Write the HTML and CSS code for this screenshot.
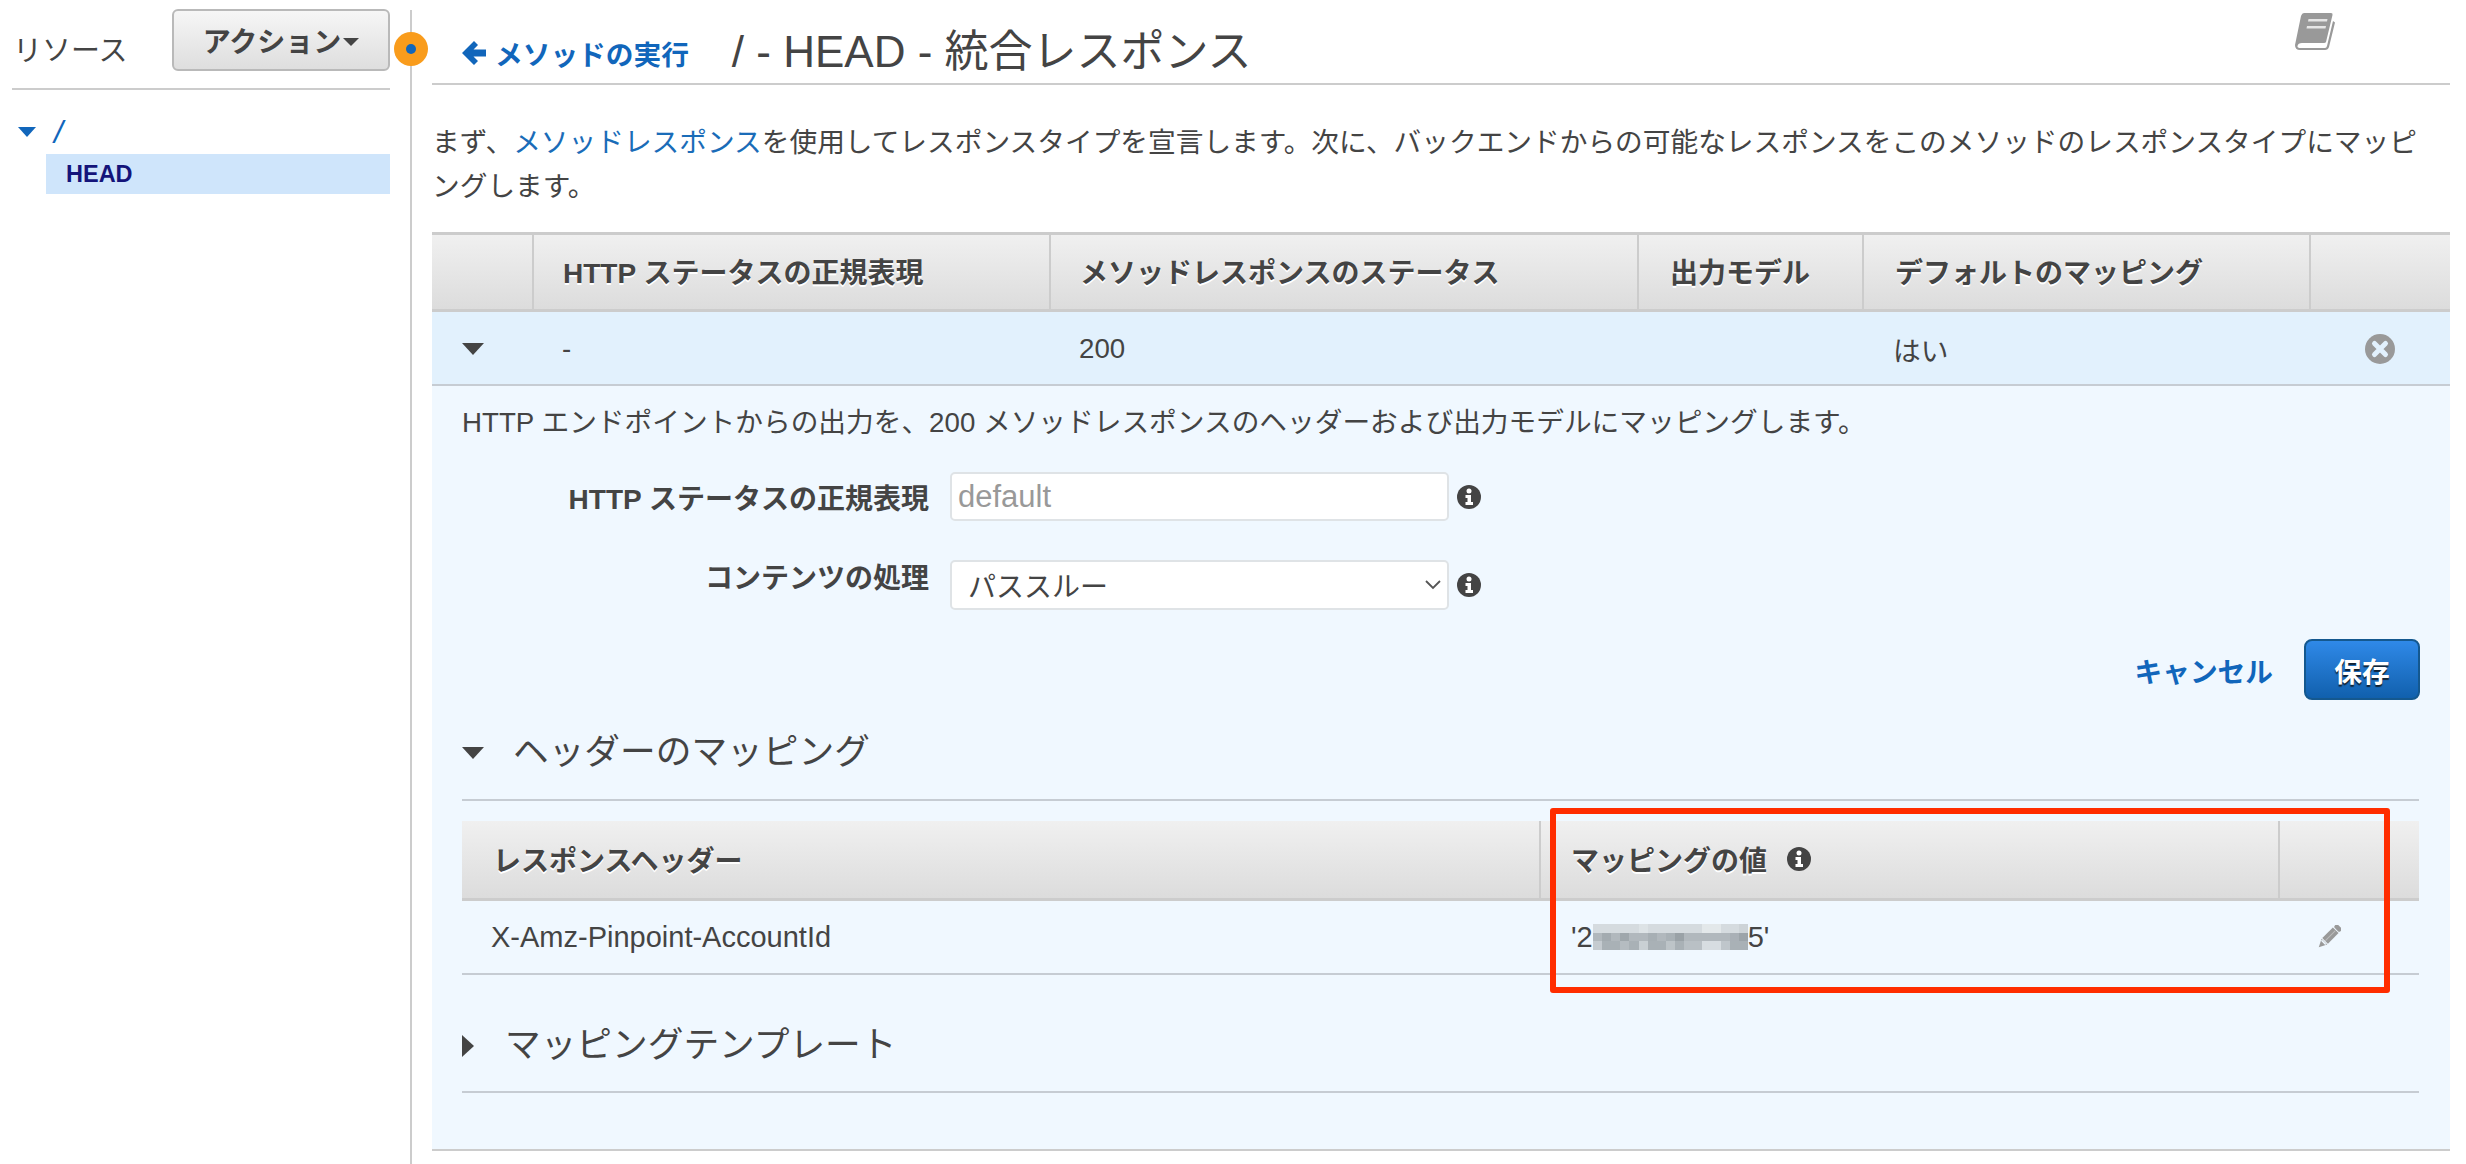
FILE: index.html
```html
<!DOCTYPE html>
<html lang="ja">
<head>
<meta charset="utf-8">
<title>統合レスポンス</title>
<link rel="stylesheet" href="styles.css">
</head>
<body>
<div class="app">
  <aside class="sidebar">
    <div class="side-head">
      <span class="side-title">リソース</span>
      <button class="action-btn">アクション<span class="caret"></span></button>
    </div>
    <div class="tree">
      <div class="tree-root"><span class="tri-blue"></span><a class="root-link">/</a></div>
      <div class="tree-method">HEAD</div>
    </div>
  </aside>
  <div class="divider"><span class="handle"><span class="handle-dot"></span></span></div>
  <main class="main">
    <header class="page-head">
      <a class="back">
        <svg class="back-arrow" viewBox="0 0 24 24"><path d="M12 0 L0 12 L12 24 L16 20 L11.500 15.500 H24 V8.500 H11.500 L16 4 Z" fill="#1166bb"/></svg>
        メソッドの実行</a>
      <h1 class="page-title">/ - HEAD - 統合レスポンス</h1>
      <svg class="book" viewBox="0 0 40 37"><path d="M9 0 H36 Q38 0 37.500 2 L31 29 Q30.500 30 29 30 H7 Q3 30 2.500 33 Q2 35 6 35 H30 Q31.500 35 32 33 L38 8 L40 9.500 L34 34 Q33 37 30 37 H5 Q0 37 0 32 L6 3 Q7 0 9 0 Z" fill="#999"/><path d="M13.500 6 H32.500 L32 8.500 H13 Z M12 13 H31 L30.500 15.500 H11.500 Z" fill="#e6e6e6"/></svg>
    </header>
    <p class="intro">まず、<a class="link">メソッドレスポンス</a>を使用してレスポンスタイプを宣言します。次に、バックエンドからの可能なレスポンスをこのメソッドのレスポンスタイプにマッピングします。</p>

    <div class="table-head outer-cols">
      <div class="th"></div>
      <div class="th">HTTP ステータスの正規表現</div>
      <div class="th">メソッドレスポンスのステータス</div>
      <div class="th">出力モデル</div>
      <div class="th">デフォルトのマッピング</div>
      <div class="th"></div>
    </div>
    <div class="row outer-cols">
      <div class="td"><span class="tri-down"></span></div>
      <div class="td">-</div>
      <div class="td">200</div>
      <div class="td"></div>
      <div class="td">はい</div>
      <div class="td center">
        <svg class="remove" viewBox="0 0 30 30"><circle cx="15" cy="15" r="15" fill="#999"/><path d="M9.500 9.500 L20.500 20.500 M20.500 9.500 L9.500 20.500" stroke="#e2f1fd" stroke-width="5" stroke-linecap="round"/></svg>
      </div>
    </div>

    <section class="panel">
      <p class="panel-intro">HTTP エンドポイントからの出力を、200 メソッドレスポンスのヘッダーおよび出力モデルにマッピングします。</p>
      <div class="form-row">
        <label class="form-label">HTTP ステータスの正規表現</label>
        <input class="form-input" placeholder="default">
        <svg class="info" viewBox="0 0 24 24"><circle cx="12" cy="12" r="12" fill="#444"/><circle cx="12" cy="6" r="2.500" fill="#fff"/><path d="M8.500 10 H14 V17 H16 V20 H8.500 V17 H10.500 V13 H8.500 Z" fill="#fff"/></svg>
      </div>
      <div class="form-row form-row-select">
        <label class="form-label label-up">コンテンツの処理</label>
        <div class="select">パススルー
          <svg class="chev" viewBox="0 0 16 10"><path d="M1 1 L8 8 L15 1" fill="none" stroke="#555" stroke-width="1.800"/></svg>
        </div>
        <svg class="info" viewBox="0 0 24 24"><circle cx="12" cy="12" r="12" fill="#444"/><circle cx="12" cy="6" r="2.500" fill="#fff"/><path d="M8.500 10 H14 V17 H16 V20 H8.500 V17 H10.500 V13 H8.500 Z" fill="#fff"/></svg>
      </div>
      <div class="actions">
        <a class="cancel">キャンセル</a>
        <button class="save">保存</button>
      </div>

      <div class="section-title first"><span class="tri-down"></span><span class="section-text">ヘッダーのマッピング</span></div>

      <div class="table-head inner-head inner-cols">
        <div class="th">レスポンスヘッダー</div>
        <div class="th">マッピングの値<svg class="info th-info" viewBox="0 0 24 24"><circle cx="12" cy="12" r="12" fill="#444"/><circle cx="12" cy="6" r="2.500" fill="#fff"/><path d="M8.500 10 H14 V17 H16 V20 H8.500 V17 H10.500 V13 H8.500 Z" fill="#fff"/></svg></div>
        <div class="th"></div>
      </div>
      <div class="inner-row inner-cols">
        <div class="td">X-Amz-Pinpoint-AccountId</div>
        <div class="td">'2<svg class="mosaic" viewBox="0 0 17 3" preserveAspectRatio="none" shape-rendering="crispEdges"><g fill="#d5dbdf"><rect width="17" height="1"/></g><rect x="5" width="1" height="1" fill="#dde3e6"/><rect x="12" width="2" height="1" fill="#e3e8ea"/><rect x="16" width="1" height="1" fill="#cdd3d7"/><rect y="1" width="17" height="1" fill="#b1b8bd"/><rect x="1" y="1" width="1" height="1" fill="#a3abb0"/><rect x="3" y="1" width="1" height="1" fill="#9fa7ac"/><rect x="6" y="1" width="1" height="1" fill="#a7afb4"/><rect x="8" y="1" width="1" height="1" fill="#a9b1b6"/><rect x="9" y="1" width="1" height="1" fill="#9aa2a7"/><rect x="15" y="1" width="1" height="1" fill="#a9b0b6"/><rect x="16" y="1" width="1" height="1" fill="#9ca4a9"/><rect y="2" width="17" height="1" fill="#a9b1b6"/><rect y="2" width="1" height="1" fill="#c5cbd0"/><rect x="3" y="2" width="1" height="1" fill="#b5bcc1"/><rect x="5" y="2" width="1" height="1" fill="#c9d0d4"/><rect x="8" y="2" width="1" height="1" fill="#bdc4c8"/><rect x="10" y="2" width="2" height="1" fill="#b9c0c5"/><rect x="12" y="2" width="2" height="1" fill="#d7dde1"/><rect x="14" y="2" width="1" height="1" fill="#bfc6cb"/></svg>5'</div>
        <div class="td pencil-cell">
          <svg class="pencil" viewBox="0 0 24 24"><g transform="rotate(45 12 12)"><rect x="8" y="-3" width="8" height="4.500" rx="1.800" fill="#999"/><rect x="8" y="2.500" width="8" height="15" fill="#999"/><path d="M8 18.500 H16 L12 26.500 Z" fill="#999"/><rect x="9" y="18.800" width="6" height="1.600" fill="#f0f8ff"/><rect x="11.500" y="3" width="1" height="14" fill="#bbb"/></g></svg>
        </div>
      </div>

      <div class="section-title second"><span class="tri-right"></span><span class="section-text">マッピングテンプレート</span></div>
    </section>
    <div class="annotation"></div>
  </main>
</div>
</body>
</html>
```
FILE: styles.css
```css
* { box-sizing: border-box; }
html, body { margin: 0; height: 100%; background: #fff; overflow: hidden; }
body {
  font-family: "Liberation Sans", "Noto Sans CJK JP", sans-serif;
  font-size: 27.700px;
  color: #444;
}
.app { display: flex; height: 1164px; padding-top: 10px; }

/* Sidebar */
.sidebar { width: 378px; margin-left: 12px; flex: none; }
.side-head {
  display: flex; justify-content: space-between; align-items: center;
  height: 80px; padding-bottom: 18px;
  border-bottom: 2px solid #ccc;
}
.side-title { font-size: 29px; line-height: 1; padding: 22px 0 0 1px; }
.action-btn {
  width: 218px; height: 62px; padding: 0;
  font: bold 28px "Liberation Sans", "Noto Sans CJK JP", sans-serif;
  color: #444;
  background: linear-gradient(#f6f6f6, #dedede);
  border: 2px solid #b9b9b9; border-radius: 6px;
  display: flex; align-items: center; justify-content: center; gap: 2px;
}
.caret { width: 0; height: 0; border-left: 8px solid transparent; border-right: 8px solid transparent; border-top: 8px solid #444; margin-top: 4px; }
.tree { padding-top: 20px; }
.tree-root { display: flex; align-items: center; height: 44px; padding-left: 6px; }
.tri-blue { width: 0; height: 0; border-left: 9px solid transparent; border-right: 9px solid transparent; border-top: 10px solid #1166bb; }
.root-link { color: #1166bb; font-style: italic; margin-left: 18px; font-size: 32px; line-height: 1; }
.tree-method {
  height: 40px; margin-left: 34px; padding-left: 20px;
  background: #cfe5fb; color: #14147a; font-weight: bold; font-size: 23.500px; line-height: 40px;
}

/* Divider */
.divider { width: 2px; margin-left: 20px; margin-right: 20px; background: #ccc; flex: none; position: relative; }
.handle {
  position: absolute; left: -16px; top: 22px; width: 34px; height: 34px; border-radius: 50%;
  background: #f99c1c; display: flex; align-items: center; justify-content: center;
}
.handle-dot { width: 10px; height: 10px; border-radius: 50%; background: #1166bb; }

/* Main */
.main { width: 2018px; flex: none; position: relative; margin-top: -10px; }
.page-head {
  height: 85px; border-bottom: 2px solid #ccc;
  display: flex; align-items: center; padding: 0 0 0 30px; position: relative;
}
.back { display: flex; align-items: center; color: #1166bb; font-weight: bold; font-size: 27.700px; gap: 9px; padding-top: 22px; }
.back-arrow { width: 24px; height: 24px; }
.page-title { margin: 0 0 0 43px; font-weight: normal; font-size: 44px; color: #444; line-height: 1; padding-top: 20px; }
.book { position: absolute; left: 1863px; top: 13px; width: 40px; height: 37px; }
.intro { margin: 36px 0 0; padding-right: 20px; line-height: 44px; font-size: 27.700px; height: 111px; }
.link { color: #1a6cb8; }

.table-head { background: linear-gradient(#f0f0f0, #dcdcdc); border-top: 3px solid #ccc; border-bottom: 3px solid #ccc; height: 80px; }
.outer-cols { display: grid; grid-template-columns: 100px 517px 588px 225px 447px 141px; }
.outer-cols > :nth-child(4), .outer-cols > :nth-child(5) { padding-left: 31px; }
.th {
  display: flex; align-items: center; font-weight: bold; font-size: 28px;
  padding-left: 29px; border-left: 2px solid #ccc; text-shadow: 0 2px 0 #fff; padding-bottom: 2px;
}
.th:first-child { border-left: none; }
.row { background: #e2f1fd; height: 74px; border-bottom: 2px solid #c6ccd3; }
.row .td { padding-top: 2px; }
.td { display: flex; align-items: center; padding-left: 30px; }
.center { justify-content: center; padding-left: 0; }
.tri-down { width: 0; height: 0; border-left: 11px solid transparent; border-right: 11px solid transparent; border-top: 12px solid #444; }
.tri-right { width: 0; height: 0; border-top: 11px solid transparent; border-bottom: 11px solid transparent; border-left: 12px solid #444; }
.remove { width: 30px; height: 30px; }

/* Panel */
.panel { background: #f0f8ff; height: 765px; padding: 0 31px 0 30px; border-bottom: 2px solid #ccc; }
.panel-intro { margin: 0; padding-top: 21px; height: 86px; line-height: 32px; }
.form-row { display: flex; align-items: center; height: 49px; }
.form-row-select { height: 50px; margin-top: 39px; }
.form-label { width: 467px; text-align: right; font-weight: bold; font-size: 28px; flex: none; }
.label-up { margin-top: -18px; }
.form-input {
  width: 499px; height: 49px; margin-left: 21px; padding: 0 6px;
  border: 2px solid #dfe3e6; border-radius: 5px; font: 31px "Liberation Sans", sans-serif; background: #fff; color: #444; flex: none;
}
.form-input::placeholder { color: #999; opacity: 1; }
.select {
  width: 499px; height: 50px; margin-left: 21px; padding-left: 16px;
  border: 2px solid #dfe3e6; border-radius: 5px; background: #fff; display: flex; align-items: center; justify-content: space-between; padding-right: 6px; flex: none; font-size: 28px;
}
.chev { width: 16px; height: 10px; }
.info { width: 24px; height: 24px; margin-left: 8px; flex: none; }
.actions { display: flex; justify-content: flex-end; align-items: center; margin: 29px -1px 0 0; height: 61px; gap: 31px; }
.cancel { color: #1166bb; font-weight: bold; }
.save {
  width: 116px; height: 61px; border: 2px solid #14588f; border-radius: 8px;
  background: linear-gradient(#2f89e8, #1160ad);
  color: #fff; font: bold 27.700px "Liberation Sans", "Noto Sans CJK JP", sans-serif; text-shadow: 0 2px 1px #123;
}
.section-title { display: flex; align-items: center; border-bottom: 2px solid #c6ccd3; }
.section-text { font-size: 35.700px; color: #444; line-height: 1; }
.first { margin-top: 22px; height: 79px; padding-bottom: 16px; }
.first .section-text { margin-left: 29px; }
.second { margin-top: 0; height: 118px; padding-top: 25px; }
.second .section-text { margin-left: 31px; }
.inner-head { margin-top: 20px; height: 80px; border-top: none; }
.inner-cols { display: grid; grid-template-columns: 1077px 739px 141px; }
.inner-row { height: 74px; border-bottom: 2px solid #c6ccd3; font-size: 29px; }
.inner-head .th { padding-left: 30px; }
.inner-head .th:first-child { padding-left: 31px; }
.inner-row .td { padding-left: 32px; }
.inner-row .td:first-child { padding-left: 29px; }
.mosaic { width: 155px; height: 26px; }
.th-info { margin-left: 20px; }
.inner-row .pencil-cell { justify-content: flex-start; padding-left: 39px; }
.pencil { width: 24px; height: 24px; }

/* Annotation: red rectangle drawn over the screenshot */
.annotation { position: absolute; left: 1118px; top: 808px; width: 840px; height: 185px; border: 6px solid #ff2d00; border-radius: 3px; }
```
